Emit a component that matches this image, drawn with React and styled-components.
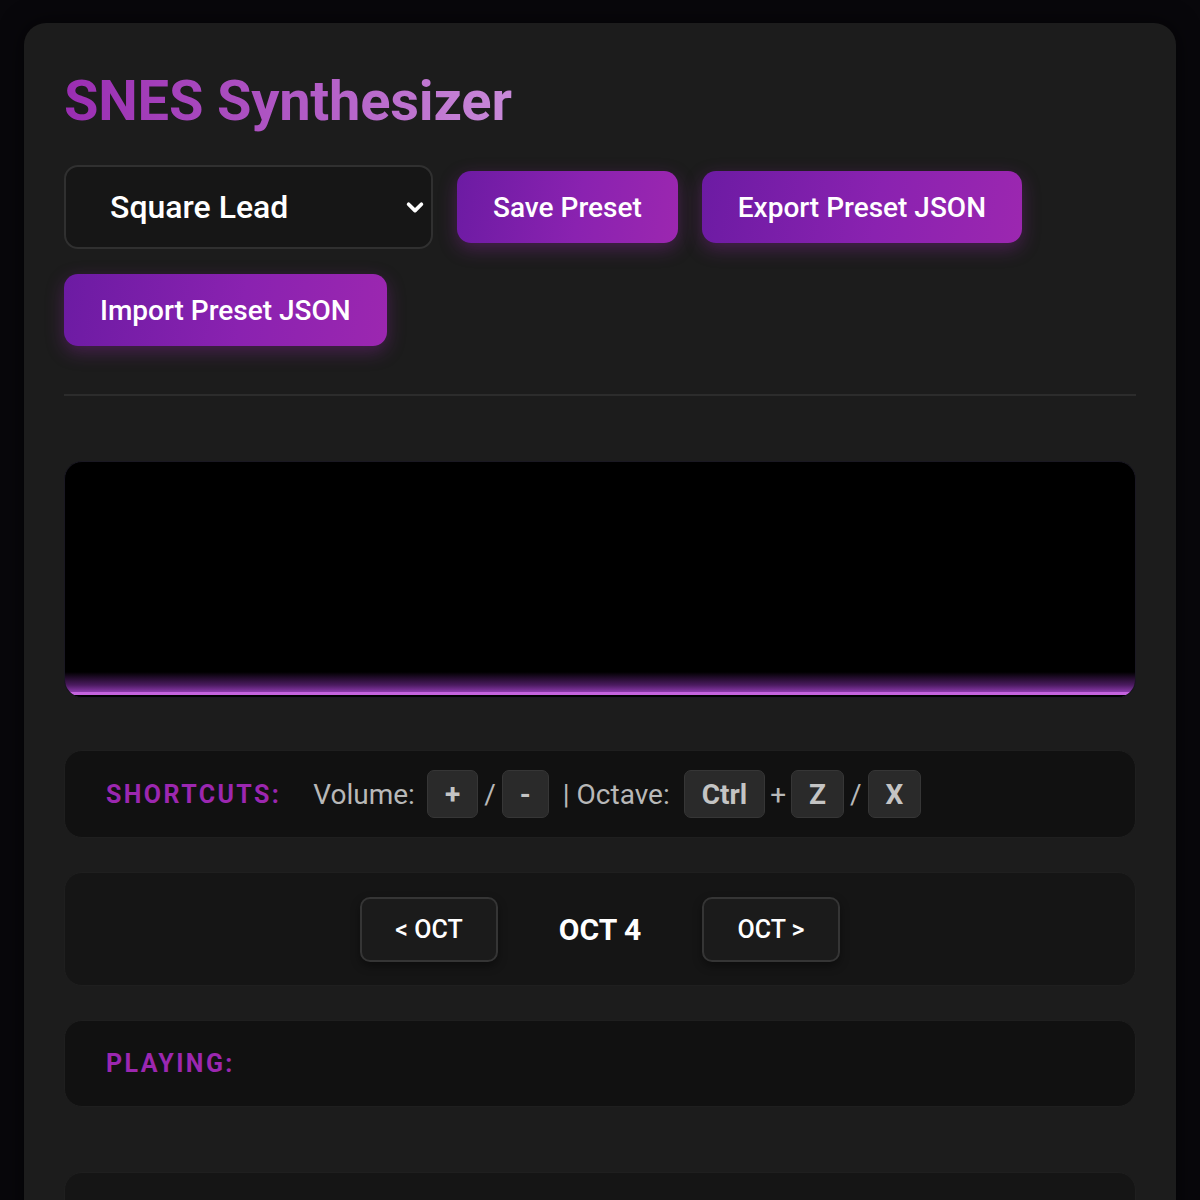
import React from "react";
import styled, { createGlobalStyle } from "styled-components";

const Global = createGlobalStyle`
  html, body { margin: 0; padding: 0; background: #08070b; }
  body { font-family: Roboto, "Noto Sans", sans-serif; color: #fff; }
  * { box-sizing: border-box; }
`;

const Page = styled.div`
  padding: 23px 24px 0;
  height: 1200px;
  overflow: hidden;
`;

const Card = styled.div`
  background: #1c1c1c;
  border-radius: 22px;
  padding: 40px 40px 60px;
  box-shadow: 0 0 24px rgba(0, 0, 0, 0.6);
  min-height: 1300px;
`;

const Title = styled.h1`
  margin: 0 0 26px;
  font-size: 56px;
  font-weight: 700;
  line-height: 76px;
  letter-spacing: -0.2px;
  background: linear-gradient(90deg, #9a2db2 0%, #b25cc6 55%, #c98ad9 100%);
  -webkit-background-clip: text;
  background-clip: text;
  color: transparent;
  display: inline-block;
`;

const Controls = styled.div`
  display: flex;
  flex-wrap: wrap;
  align-items: center;
  gap: 25px 24px;
  padding-bottom: 48px;
  border-bottom: 2px solid #2c2c2c;
`;

const SelectWrap = styled.div`
  position: relative;
  width: 369px;
  height: 84px;
`;

const Select = styled.select`
  appearance: none;
  -webkit-appearance: none;
  width: 100%;
  height: 100%;
  background: #161616;
  border: 2px solid #303030;
  border-radius: 14px;
  color: #fff;
  font-family: Roboto, sans-serif;
  font-size: 32px;
  font-weight: 500;
  padding: 0 40px 0 44px;
  outline: none;
`;

const Chevron = styled.svg`
  position: absolute;
  right: 7px;
  top: 50%;
  transform: translateY(-50%);
  pointer-events: none;
`;

const Button = styled.button`
  height: 72px;
  padding: 0 36px;
  border: none;
  border-radius: 14px;
  background: linear-gradient(100deg, #6c1ba3 0%, #8a22b0 55%, #9c27b0 100%);
  color: #fff;
  font-family: Roboto, sans-serif;
  font-size: 28px;
  font-weight: 500;
  box-shadow: 0 6px 18px rgba(156, 39, 176, 0.35);
  cursor: pointer;
`;

const Visualizer = styled.div`
  margin-top: 65px;
  height: 237px;
  background: #000;
  border: 1px solid #1a1822;
  border-radius: 18px;
  overflow: hidden;
  display: flex;
  flex-direction: column;
  justify-content: flex-end;
`;

const Glow = styled.div`
  height: 20px;
  background: linear-gradient(180deg, rgba(120, 40, 150, 0) 0%, rgba(125, 45, 160, 0.6) 65%, rgba(155, 65, 190, 0.9) 100%);
`;

const Line = styled.div`
  height: 3px;
  background: #c463de;
  margin-bottom: 2px;
`;

const Panel = styled.div`
  margin-top: ${(p) => p.$mt}px;
  background: ${(p) => p.$bg || "#111"};
  border: 1px solid #1f1f1f;
  border-radius: 18px;
  height: ${(p) => p.$h}px;
  display: flex;
  align-items: center;
  justify-content: ${(p) => (p.$center ? "center" : "flex-start")};
  padding: 0 41px;
`;

const Label = styled.span`
  color: #9c27b0;
  font-size: 25px;
  font-weight: 700;
  letter-spacing: 2.4px;
  margin-right: 32px;
`;

const Hint = styled.span`
  color: #b8b8b8;
  font-size: 28px;
  margin: 0 ${(p) => p.$mr || 0}px 0 ${(p) => p.$ml || 0}px;
`;

const Sep = styled.span`
  color: #b8b8b8;
  font-size: 28px;
  margin: 0 ${(p) => p.$m || 6}px;
`;

const Kbd = styled.kbd`
  display: inline-flex;
  align-items: center;
  justify-content: center;
  height: 48px;
  padding: 0 17px;
  background: #2a2a2a;
  border: 1px solid #363636;
  border-radius: 7px;
  color: #c4c4c4;
  font-family: Roboto, sans-serif;
  font-size: 28px;
  font-weight: 700;
`;

const OctButton = styled.button`
  width: 138px;
  height: 65px;
  background: #1b1b1b;
  border: 2px solid #353535;
  border-radius: 10px;
  color: #fff;
  font-family: Roboto, sans-serif;
  font-size: 25px;
  font-weight: 500;
  box-shadow: 0 4px 10px rgba(0, 0, 0, 0.4);
`;

const OctLabel = styled.span`
  width: 204px;
  text-align: center;
  font-size: 30px;
  font-weight: 700;
  color: #fff;
`;

export default function App() {
  return (
    <>
      <Global />
      <Page>
        <Card>
          <Title>SNES Synthesizer</Title>
          <Controls>
            <SelectWrap>
              <Select defaultValue="square">
                <option value="square">Square Lead</option>
                <option value="saw">Saw Bass</option>
                <option value="pad">Soft Pad</option>
              </Select>
              <Chevron width="22" height="22" viewBox="0 0 24 24" fill="none" stroke="#fff" strokeWidth="4" strokeLinecap="round" strokeLinejoin="round">
                <path d="M5 9l7 7 7-7" />
              </Chevron>
            </SelectWrap>
            <Button>Save Preset</Button>
            <Button>Export Preset JSON</Button>
            <Button>Import Preset JSON</Button>
          </Controls>

          <Visualizer>
            <Glow />
            <Line />
          </Visualizer>

          <Panel $mt={52} $h={88} $bg="#111">
            <Label>SHORTCUTS:</Label>
            <Hint $mr={12}>Volume:</Hint>
            <Kbd>+</Kbd>
            <Sep>/</Sep>
            <Kbd>-</Kbd>
            <Hint $ml={14} $mr={14}>| Octave:</Hint>
            <Kbd>Ctrl</Kbd>
            <Sep $m={5}>+</Sep>
            <Kbd>Z</Kbd>
            <Sep>/</Sep>
            <Kbd>X</Kbd>
          </Panel>

          <Panel $mt={34} $h={114} $bg="#151515" $center>
            <OctButton>&lt; OCT</OctButton>
            <OctLabel>OCT 4</OctLabel>
            <OctButton>OCT &gt;</OctButton>
          </Panel>

          <Panel $mt={34} $h={87} $bg="#111">
            <Label>PLAYING:</Label>
          </Panel>

          <Panel $mt={65} $h={120} $bg="#151515" />
        </Card>
      </Page>
    </>
  );
}
